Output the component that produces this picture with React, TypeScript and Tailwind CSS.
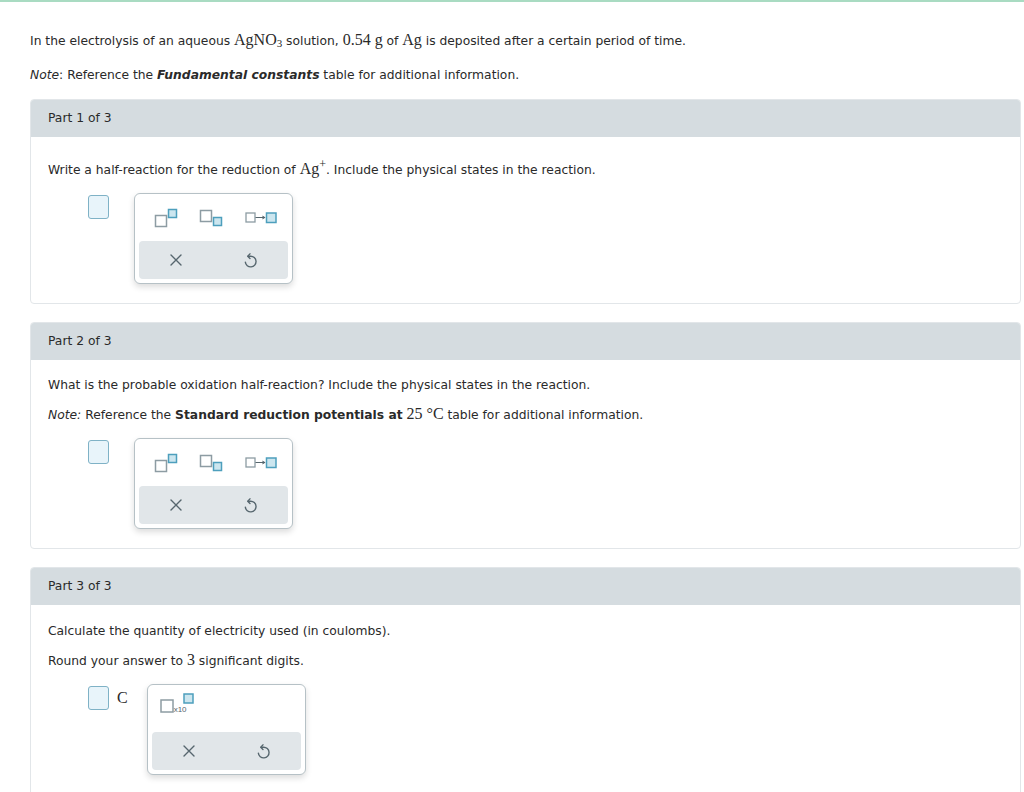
import React from "react";

const textFont = { fontFamily: '"DejaVu Sans", Verdana, sans-serif' };

function M({ children }: { children: React.ReactNode }) {
    return (
        <span className="font-['Liberation_Serif',serif] text-[16px] leading-none">
            {children}
        </span>
    );
}

function AnswerBox() {
    return (
        <div className="w-[21px] h-[24px] rounded-[3px] border-[1.5px] border-[#7fb2c6] bg-[#e8f4fa]" />
    );
}

function SuperIcon() {
    return (
        <svg width="24" height="20" viewBox="0 0 24 20">
            <rect x="1.5" y="7.5" width="11" height="11" fill="none" stroke="#8d9ca3" strokeWidth="1.5" />
            <rect x="14.5" y="1.5" width="8" height="8" fill="#cce6ef" stroke="#4d9fbd" strokeWidth="1.5" />
        </svg>
    );
}

function SubIcon() {
    return (
        <svg width="24" height="18" viewBox="0 0 24 18">
            <rect x="1.5" y="1.5" width="11" height="11" fill="none" stroke="#8d9ca3" strokeWidth="1.5" />
            <rect x="14.5" y="8.5" width="8" height="8" fill="#cce6ef" stroke="#4d9fbd" strokeWidth="1.5" />
        </svg>
    );
}

function ArrowIcon() {
    return (
        <svg width="32" height="12" viewBox="0 0 32 12">
            <rect x="1" y="1" width="9" height="9" fill="none" stroke="#8d9ca3" strokeWidth="1.3" />
            <line x1="10.5" y1="5.5" x2="20" y2="5.5" stroke="#55656c" strokeWidth="1.2" />
            <path d="M17.5 3.5 L20.5 5.5 L17.5 7.5" fill="#55656c" />
            <rect x="21.5" y="1" width="9.5" height="9.5" fill="#cce6ef" stroke="#4d9fbd" strokeWidth="1.5" />
        </svg>
    );
}

function SciIcon() {
    return (
        <div className="flex items-start">
            <svg width="14" height="14" viewBox="0 0 14 14" className="mt-[6px]">
                <rect x="1" y="1" width="12" height="12" fill="none" stroke="#8d9ca3" strokeWidth="1.5" />
            </svg>
            <span className="text-[8px] leading-none mt-[13px] text-[#55656c] font-['Liberation_Sans',sans-serif]">
                x10
            </span>
            <svg width="11" height="11" viewBox="0 0 11 11" className="-ml-[4px]">
                <rect x="1" y="1" width="9" height="9" fill="#cce6ef" stroke="#4d9fbd" strokeWidth="1.5" />
            </svg>
        </div>
    );
}

function ClearIcon() {
    return (
        <svg width="12" height="12" viewBox="0 0 12 12">
            <path d="M1 1 L11 11 M11 1 L1 11" stroke="#56666e" strokeWidth="1.4" strokeLinecap="round" />
        </svg>
    );
}

function UndoIcon() {
    return (
        <svg width="13" height="15" viewBox="0 0 12 14">
            <path d="M4 3 H6 A5 5 0 1 1 1.2 8.5" fill="none" stroke="#56666e" strokeWidth="1.3" strokeLinecap="round" />
            <path d="M5.5 0.8 L3.4 3 L5.5 5.2" fill="none" stroke="#56666e" strokeWidth="1.3" strokeLinecap="round" strokeLinejoin="round" />
        </svg>
    );
}

function Palette({ scientific }: { scientific?: boolean }) {
    return (
        <div className="w-[159px] h-[91px] rounded-[6px] border border-[#b6c1c6] bg-white shadow-[0_3px_6px_rgba(0,0,0,0.14)] flex flex-col px-[4px] pb-[4px]">
            {scientific ? (
                <div className="h-[47px] flex items-start pl-[8px] pt-[8px]">
                    <SciIcon />
                </div>
            ) : (
                <div className="h-[47px] flex items-center justify-around pt-[1px] pl-[4px]">
                    <SuperIcon />
                    <SubIcon />
                    <ArrowIcon />
                </div>
            )}
            <div className="flex-1 rounded-[4px] bg-[#e1e6e9] flex items-center justify-around">
                <ClearIcon />
                <UndoIcon />
            </div>
        </div>
    );
}

function PartCard({
    label,
    bodyTop,
    children,
    answer,
    grow,
}: {
    label: string;
    bodyTop: string;
    children: React.ReactNode;
    answer: React.ReactNode;
    grow?: boolean;
}) {
    return (
        <div className={"border border-[#e2e6e9] rounded-[4px] overflow-hidden " + (grow ? "pb-[40px]" : "pb-[19px]")}>
            <div className="h-[37px] bg-[#d5dce0] flex items-center px-[17px]">{label}</div>
            <div className={"px-[17px] " + bodyTop}>
                {children}
                <div className="mt-[13px] flex items-start">{answer}</div>
            </div>
        </div>
    );
}

export default function App() {
    return (
        <div style={textFont} className="w-[1024px] h-[792px] overflow-hidden bg-white text-[12.3px] text-[#2a2a2a]">
            <div className="h-[2px] bg-[#a9dbc2]" />
            <div className="pl-[30px] pr-[3px] pt-[29px]">
                <p className="leading-[20px]">
                    In the electrolysis of an aqueous <M>AgNO<sub className="text-[11px] relative top-[2px]">3</sub></M> solution, <M>0.54 g</M> of <M>Ag</M> is deposited after a certain period of time.
                </p>
                <p className="leading-[20px] mt-[14px]">
                    <i>Note</i>: Reference the <b><i>Fundamental constants</i></b> table for additional information.
                </p>

                <div className="mt-[14px] flex flex-col gap-[18px]">
                    <PartCard
                        label="Part 1 of 3"
                        bodyTop="pt-[23px]"
                        answer={
                            <>
                                <div className="ml-[40px] mt-[2px]"><AnswerBox /></div>
                                <div className="ml-[25px]"><Palette /></div>
                            </>
                        }
                    >
                        <p className="leading-[20px]">
                            Write a half-reaction for the reduction of <M>Ag<sup className="text-[12px]">+</sup></M>. Include the physical states in the reaction.
                        </p>
                    </PartCard>

                    <PartCard
                        label="Part 2 of 3"
                        bodyTop="pt-[15px]"
                        answer={
                            <>
                                <div className="ml-[40px] mt-[2px]"><AnswerBox /></div>
                                <div className="ml-[25px]"><Palette /></div>
                            </>
                        }
                    >
                        <p className="leading-[20px]">
                            What is the probable oxidation half-reaction? Include the physical states in the reaction.
                        </p>
                        <p className="leading-[20px] mt-[10px]">
                            <i>Note:</i> Reference the <b>Standard reduction potentials at</b> <M>25 °C</M> table for additional information.
                        </p>
                    </PartCard>

                    <PartCard
                        label="Part 3 of 3"
                        bodyTop="pt-[16px]"
                        grow
                        answer={
                            <>
                                <div className="ml-[40px] mt-[2px]"><AnswerBox /></div>
                                <div className="ml-[8px] mt-[2px] font-['Liberation_Serif',serif] text-[16px]">C</div>
                                <div className="ml-[19px]"><Palette scientific /></div>
                            </>
                        }
                    >
                        <p className="leading-[20px]">Calculate the quantity of electricity used (in coulombs).</p>
                        <p className="leading-[20px] mt-[10px]">
                            Round your answer to <M>3</M> significant digits.
                        </p>
                    </PartCard>
                </div>
            </div>
        </div>
    );
}
